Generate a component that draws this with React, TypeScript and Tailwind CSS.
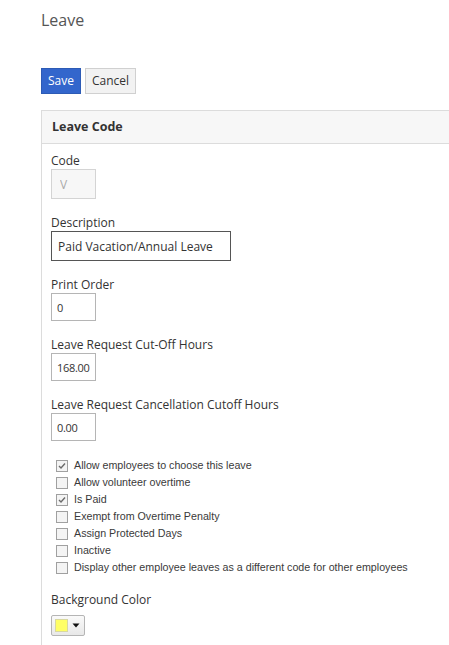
import { useState } from 'react';

const fields = [
  { label: 'Print Order', value: '0' },
  { label: 'Leave Request Cut-Off Hours', value: '168.00' },
  { label: 'Leave Request Cancellation Cutoff Hours', value: '0.00' },
];

const options = [
  { label: 'Allow employees to choose this leave', checked: true },
  { label: 'Allow volunteer overtime', checked: false },
  { label: 'Is Paid', checked: true },
  { label: 'Exempt from Overtime Penalty', checked: false },
  { label: 'Assign Protected Days', checked: false },
  { label: 'Inactive', checked: false },
  { label: 'Display other employee leaves as a different code for other employees', checked: false },
];

function Check({ checked }: { checked: boolean }) {
  return (
    <span className="w-[12px] h-[12px] border border-[#a0a0a0] bg-[#f4f4f4] flex items-center justify-center shrink-0">
      {checked && (
        <svg width="8" height="8" viewBox="0 0 8 8">
          <path d="M1 4 L3 6 L7 1.5" fill="none" stroke="#6b6b6b" strokeWidth="1.4" />
        </svg>
      )}
    </span>
  );
}

export default function App() {
  const [desc, setDesc] = useState('Paid Vacation/Annual Leave');

  return (
    <div className="min-h-screen bg-white text-[#333] font-['Open_Sans',sans-serif] pl-[41px] pt-[9px] overflow-hidden">
      <h1 className="text-[16px] text-[#555] leading-[22px]">Leave</h1>

      <div className="flex gap-[4px] mt-[37px]">
        <button className="h-[26px] px-[6px] bg-[#3366cc] text-white text-[12px] border border-[#2d5bb5]">Save</button>
        <button className="h-[26px] px-[6px] bg-[#f2f2f2] text-[#333] text-[12px] border border-[#d0d0d0]">Cancel</button>
      </div>

      {/* Leave Code panel */}
      <section className="mt-[16px] border-l border-t border-[#dcdcdc] w-[420px]">
        <div className="h-[33px] bg-[#f7f7f7] border-b border-[#dcdcdc] flex items-center pl-[10px]">
          <h2 className="text-[12.5px] font-bold text-[#333]">Leave Code</h2>
        </div>

        <div className="pl-[9px] pt-[9px] pb-[10px]">
          <label className="block text-[12px] leading-[16px]">Code</label>
          <input
            disabled
            value="V"
            className="block w-[45px] h-[30px] border border-[#d4d4d4] bg-[#f7f7f7] text-[#aaa] text-[12px] px-[8px]"
          />

          <label className="block text-[12px] leading-[16px] mt-[16px]">Description</label>
          <input
            value={desc}
            onChange={(e) => setDesc(e.target.value)}
            className="block w-[180px] h-[30px] border border-[#555] text-[12px] px-[6px] outline-none"
          />

          {fields.map((f) => (
            <div key={f.label} className="mt-[16px]">
              <label className="block text-[12px] leading-[16px]">{f.label}</label>
              <input
                defaultValue={f.value}
                className="block w-[45px] h-[28px] border border-[#b5b5b5] text-[#333] text-[11px] px-[5px] tracking-[-0.3px] outline-none"
              />
            </div>
          ))}

          <div className="mt-[16px] pl-[5px] flex flex-col font-['Liberation_Sans',sans-serif] text-[10.7px]">
            {options.map((o) => (
              <label key={o.label} className="h-[17px] flex items-center gap-[6px] text-[#3a3a3a]">
                <Check checked={o.checked} />
                <span>{o.label}</span>
              </label>
            ))}
          </div>

          <label className="block text-[12px] leading-[16px] mt-[16px]">Background Color</label>
          <button className="mt-[7px] flex items-center gap-[4px] h-[21px] w-[34px] px-[3px] border border-[#b5b5b5] rounded-[2px] bg-gradient-to-b from-[#fafafa] to-[#e8e8e8]">
            <span className="w-[13px] h-[13px] bg-[#ffff66] border border-[#d8d8a0]" />
            <svg width="8" height="5" viewBox="0 0 8 5">
              <path d="M0.5 0.5 H7.5 L4 4.5 Z" fill="#111" />
            </svg>
          </button>
        </div>
      </section>
    </div>
  );
}
